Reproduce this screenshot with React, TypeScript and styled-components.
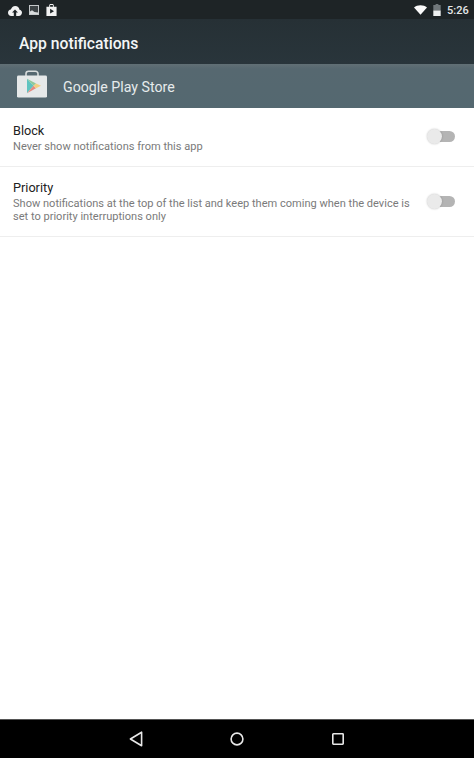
import styled, { createGlobalStyle } from "styled-components";

const GlobalStyle = createGlobalStyle`
  html, body {
    margin: 0;
    padding: 0;
    background: #fff;
  }
`;

const Screen = styled.div`
  width: 474px;
  height: 758px;
  display: flex;
  flex-direction: column;
  overflow: hidden;
  font-family: Roboto, "Liberation Sans", sans-serif;
  background: #fff;
`;

const StatusBar = styled.div`
  height: 19px;
  flex: none;
  background: #1e2426;
  display: flex;
  align-items: center;
  justify-content: space-between;
  padding: 1px 7px 0 8px;
  box-sizing: border-box;
`;

const IconGroup = styled.div<{ $gap: number }>`
  display: flex;
  align-items: center;
  gap: ${({ $gap }) => $gap}px;
`;

const Clock = styled.span`
  color: #e4e7e8;
  font-size: 11px;
  font-weight: 500;
  width: 20px;
`;

const ActionBar = styled.div`
  height: 45px;
  flex: none;
  background: linear-gradient(#263035, #29353b);
  display: flex;
  align-items: center;
  padding: 3px 0 0 19px;
  box-sizing: border-box;
`;

const Title = styled.h1`
  margin: 0;
  color: #f4f6f6;
  font-size: 15.7px;
  font-weight: 500;
`;

const AppHeader = styled.div`
  height: 44px;
  flex: none;
  background: linear-gradient(#616f75 0, #566870 5px, #546870 100%);
  display: flex;
  align-items: center;
  padding-left: 16px;
  gap: 15px;
  box-sizing: border-box;
`;

const AppIcon = styled.svg`
  margin-bottom: 4px;
`;

const AppName = styled.span`
  color: #e6ebec;
  font-size: 14.2px;
  margin-top: 1px;
`;

const List = styled.div`
  flex: 1;
  background: #fff;
`;

const Row = styled.div<{ $height: number }>`
  height: ${({ $height }) => $height}px;
  box-sizing: border-box;
  padding: 0 19px 0 13px;
  display: flex;
  align-items: center;
  justify-content: space-between;
  border-bottom: 1px solid #eeeeee;
`;

const RowText = styled.div<{ $nudge?: number }>`
  width: 405px;
  margin-top: ${({ $nudge = 0 }) => $nudge}px;
`;

const RowTitle = styled.div`
  color: #212121;
  font-size: 12.7px;
  line-height: 16px;
`;

const RowSummary = styled.div`
  color: #7a7a7a;
  font-size: 11.05px;
  line-height: 13px;
  margin-top: 1px;
`;

const Switch = styled.div`
  position: relative;
  width: 28px;
  height: 16px;
  flex: none;
`;

const SwitchTrack = styled.div`
  position: absolute;
  left: 6px;
  right: 0;
  top: 2px;
  height: 11px;
  border-radius: 6px;
  background: #b4b4b4;
`;

const SwitchThumb = styled.div`
  position: absolute;
  left: 0;
  top: 0;
  width: 15px;
  height: 15px;
  border-radius: 50%;
  background: #eaeaea;
  box-shadow: 0 0 2px rgba(0, 0, 0, 0.25);
`;

const NavBar = styled.div`
  height: 38px;
  flex: none;
  background: #000;
  display: flex;
  align-items: center;
  justify-content: center;
  gap: 87px;
  padding-right: 1px;
  box-shadow: 0 -1px 0 #555;
`;

const Toggle = () => (
  <Switch>
    <SwitchTrack />
    <SwitchThumb />
  </Switch>
);

const UploadIcon = () => (
  <svg width="14" height="11" viewBox="0 0 14 11">
    <path
      fill="#f2f2f2"
      d="M3.2 11C1.4 11 0 9.6 0 7.8 0 6.1 1.3 4.8 2.8 4.6 3.5 2.5 5.1 1 7.2 1c2.3 0 4 1.6 4.3 3.7C12.9 4.9 14 6.1 14 7.6 14 9.5 12.6 11 10.8 11H8.2V7.6H10L7 4.4 4 7.6h1.8V11z"
    />
  </svg>
);

const ImageIcon = () => (
  <svg width="10" height="10" viewBox="0 0 10 10">
    <rect x="0.5" y="0.5" width="9" height="9" fill="#3c4244" stroke="#c4c8c9" />
    <path fill="#d8dbdc" d="M1 9V6.4L3 5.2 5.5 7 9 7.4V9z" />
  </svg>
);

const BagIcon = () => (
  <svg width="11" height="12" viewBox="0 0 11 13">
    <path
      fill="#f2f2f2"
      fillRule="evenodd"
      d="M0 3h3V1.6C3 .7 3.7 0 4.5 0h2C7.3 0 8 .7 8 1.6V3h3v10H0zM4 3h3V1.2H4zM4 5.2v5.2L8.2 7.8z"
    />
  </svg>
);

const WifiIcon = () => (
  <svg width="13" height="10" viewBox="0 0 15 11">
    <path fill="#fafafa" d="M0 2.6C2 1 4.6 0 7.5 0S13 1 15 2.6L7.5 11z" />
  </svg>
);

const BatteryIcon = () => (
  <svg width="8" height="12" viewBox="0 0 8 13">
    <path fill="#70777a" d="M2.5 0h3v1H8v6H0V1h2.5z" />
    <rect y="7" width="8" height="6" fill="#eef0f0" />
  </svg>
);

const PlayStoreIcon = () => (
  <AppIcon width="32" height="28" viewBox="0 0 32 30" preserveAspectRatio="none">
    <path fill="none" stroke="#d8dcdc" strokeWidth="1.6" d="M10 7V4c0-1.6 1-2.6 2.6-2.6h6.8C21 1.4 22 2.4 22 4v3" />
    <rect x="1" y="6" width="30" height="23.5" rx="1.5" fill="#e6e9e9" />
    <path fill="#5fc4c0" d="M11 9.5 17.5 17 11 25z" />
    <path fill="#8fc99a" d="M11 9.5 20 14.5 17.5 17z" />
    <path fill="#e58a80" d="M11 25 20 19.5 17.5 17z" />
    <path fill="#f2cf80" d="M20 14.5 25 17 20 19.5 17.5 17z" />
  </AppIcon>
);

const BackIcon = () => (
  <svg width="14" height="16" viewBox="0 0 14 16">
    <path fill="none" stroke="#e8e8e8" strokeWidth="1.6" strokeLinejoin="round" d="M12.6 1.2V14.8L1.4 8z" />
  </svg>
);

const HomeIcon = () => (
  <svg width="14" height="14" viewBox="0 0 14 14">
    <circle cx="7" cy="7" r="5.9" fill="none" stroke="#e8e8e8" strokeWidth="1.6" />
  </svg>
);

const RecentsIcon = () => (
  <svg width="13" height="12" viewBox="0 0 13 12">
    <rect x="1.8" y="0.8" width="10.4" height="10.4" rx="0.6" fill="none" stroke="#e8e8e8" strokeWidth="1.6" />
  </svg>
);

export default function App() {
  return (
    <Screen>
      <GlobalStyle />
      <StatusBar>
        <IconGroup $gap={7}>
          <UploadIcon />
          <ImageIcon />
          <BagIcon />
        </IconGroup>
        <IconGroup $gap={6}>
          <WifiIcon />
          <BatteryIcon />
          <Clock>5:26</Clock>
        </IconGroup>
      </StatusBar>
      <ActionBar>
        <Title>App notifications</Title>
      </ActionBar>
      <AppHeader>
        <PlayStoreIcon />
        <AppName>Google Play Store</AppName>
      </AppHeader>
      <List>
        <Row $height={59}>
          <RowText $nudge={2}>
            <RowTitle>Block</RowTitle>
            <RowSummary>Never show notifications from this app</RowSummary>
          </RowText>
          <Toggle />
        </Row>
        <Row $height={70}>
          <RowText>
            <RowTitle>Priority</RowTitle>
            <RowSummary>
              Show notifications at the top of the list and keep them coming when the device is set to priority
              interruptions only
            </RowSummary>
          </RowText>
          <Toggle />
        </Row>
      </List>
      <NavBar>
        <BackIcon />
        <HomeIcon />
        <RecentsIcon />
      </NavBar>
    </Screen>
  );
}
